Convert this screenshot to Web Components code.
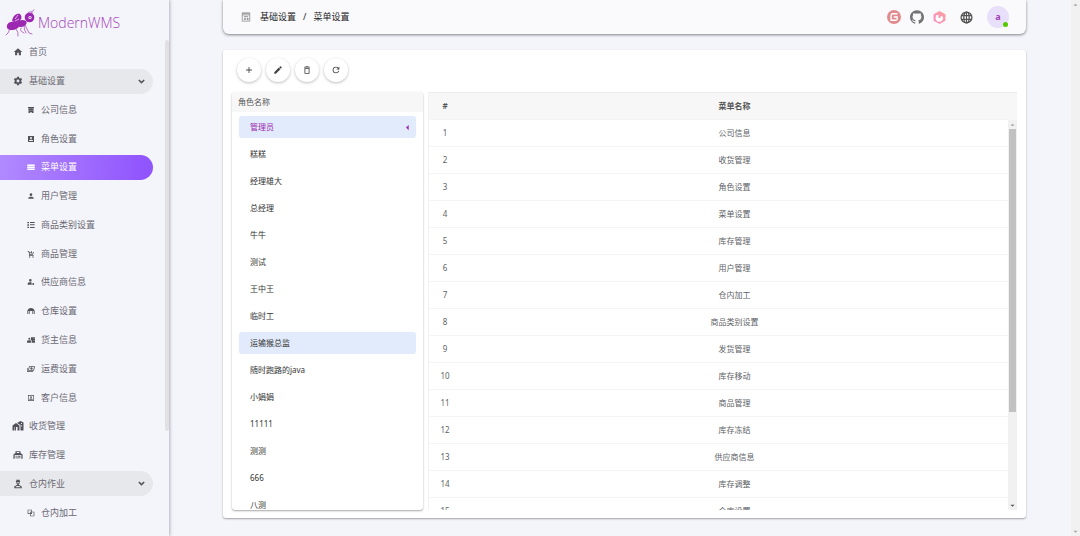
<!DOCTYPE html>
<html lang="zh-CN">
<head>
<meta charset="utf-8">
<title>ModernWMS</title>
<style>
html, body { height: 100%; margin: 0; }
body {
  font-family: "Noto Sans", "Noto Sans CJK SC", sans-serif;
  background: #f4f5fa;
  overflow: hidden;
}
</style>
</head>
<body>
<wms-app></wms-app>
<script>
const ICONS = {
  home: '<path d="M10,20V14H14V20H19V12H22L12,3L2,12H5V20H10Z"/>',
  cog: '<path d="M12,15.5A3.5,3.5 0 0,1 8.5,12A3.5,3.5 0 0,1 12,8.5A3.5,3.5 0 0,1 15.5,12A3.5,3.5 0 0,1 12,15.5M19.43,12.97C19.47,12.65 19.5,12.33 19.5,12C19.5,11.67 19.47,11.34 19.43,11L21.54,9.37C21.73,9.22 21.78,8.95 21.66,8.73L19.66,5.27C19.54,5.05 19.27,4.96 19.05,5.05L16.56,6.05C16.04,5.66 15.5,5.32 14.87,5.07L14.5,2.42C14.46,2.18 14.25,2 14,2H10C9.75,2 9.54,2.18 9.5,2.42L9.13,5.07C8.5,5.32 7.96,5.66 7.44,6.05L4.95,5.05C4.73,4.96 4.46,5.05 4.34,5.27L2.34,8.73C2.21,8.95 2.27,9.22 2.46,9.37L4.57,11C4.53,11.34 4.5,11.67 4.5,12C4.5,12.33 4.53,12.65 4.57,12.97L2.46,14.63C2.27,14.78 2.21,15.05 2.34,15.27L4.34,18.73C4.46,18.95 4.73,19.03 4.95,18.95L7.44,17.94C7.96,18.34 8.5,18.68 9.13,18.93L9.5,21.58C9.54,21.82 9.75,22 10,22H14C14.25,22 14.46,21.82 14.5,21.58L14.87,18.93C15.5,18.67 16.04,18.34 16.56,17.94L19.05,18.95C19.27,19.03 19.54,18.95 19.66,18.73L21.66,15.27C21.78,15.05 21.73,14.78 21.54,14.63L19.43,12.97Z"/>',
  chevron: '<path d="M7.41,7.58L12,12.17L16.59,7.58L19,10L12,17L5,10L7.41,7.58Z"/>',
  building: '<path fill-rule="evenodd" d="M3,3H21V6H19.500V21H14V18H10V21H4.500V6H3ZM8,7V9H10V7ZM14,7V9H16V7ZM8,12V14H10V12ZM14,12V14H16V12Z"/>',
  badge: '<path fill-rule="evenodd" d="M3,3H21V21H3ZM12,6A3,3 0 0,0 12,12A3,3 0 0,0 12,6ZM6,18H18V17C18,15 14,14 12,14C10,14 6,15 6,17Z"/>',
  menu: '<path d="M1,3H23V21H1Z" opacity=".55"/><path d="M1,6H23V9H1ZM1,12H23V15H1ZM1,18H23V21H1Z"/>',
  account: '<path d="M12,4A4,4 0 0,1 16,8A4,4 0 0,1 12,12A4,4 0 0,1 8,8A4,4 0 0,1 12,4M12,14C16.42,14 20,15.79 20,18V20H4V18C4,15.79 7.58,14 12,14Z"/>',
  list: '<path d="M1,3H6V7H1ZM9,3H23V6H9ZM1,10H6V14H1ZM9,10H23V13H9ZM1,17H6V21H1ZM9,18H23V21H9Z"/>',
  cart: '<path d="M2,3H6L7,6H10V8H8L9.5,12H16L19,6L21,7L17.5,14H9L8,16H20V18H7L5.5,16L7,13L4.5,5H2ZM12,3H14V7H17L13,11L9,7H12ZM8,19A2,2 0 0,1 8,23A2,2 0 0,1 8,19M18,19A2,2 0 0,1 18,23A2,2 0 0,1 18,19"/>',
  supplier: '<path d="M10,3A4,4 0 0,1 10,11A4,4 0 0,1 10,3M10,13C11.5,13 13,13.3 14,13.7V20H2V17C2,14.5 6,13 10,13M19,14L20,16L22,17L20.500,18L21,21H16L16.500,18L15,17L17.500,16Z"/>',
  warehouse: '<path fill-rule="evenodd" d="M1,21V11C3,5 8,3 12,3C16,3 21,5 23,11V21H20V12H17V21H15V12H9V21H7V12H4V21Z"/>',
  owner: '<path d="M7,5A3,3 0 0,1 7,11A3,3 0 0,1 7,5M0,20V16C1,12 12,12 13,16V20ZM12,4H24V20H15V15L12,12ZM20,7V9H22V7ZM20,12V14H22V12Z" fill-rule="evenodd"/>',
  money: '<path fill-rule="evenodd" d="M6,4H24L21,17H3ZM8,6L6,15H19L21,6ZM14,7A3,3 0 0,1 13,14A3,3 0 0,1 14,7M1,9H3L2,19H18V21H0Z"/>',
  customer: '<path fill-rule="evenodd" d="M3,3H21V21H3ZM5,5V19H19V5ZM12,7A2.500,2.500 0 0,1 12,12A2.500,2.500 0 0,1 12,7M7,17V16C7,13 17,13 17,16V17Z"/>',
  receive: '<path d="M1,21V11L8,6L15,11V21H11V14H8V21H5V14H4V21ZM10,6L17,2L23,5V21H17V10ZM18,6V8H20V6ZM18,11V13H20V11Z" fill-rule="evenodd"/>',
  stock: '<path d="M1,21V11L6,7V3H18V7L23,11V21H20V12H4V21ZM9,5V7H15V5ZM6,14H9V16H6ZM11,14H18V16H11ZM6,18H18V20H6Z" fill-rule="evenodd"/>',
  worker: '<path fill-rule="evenodd" d="M8,2H16V5H17V7H16A4,4 0 0,1 14,12V14L21,18V22H3V18L10,14V12A4,4 0 0,1 8,7H7V5H8ZM10,8V10H14V8ZM9,17L6,19V20H18V19L15,17Z"/>',
  process: '<path fill-rule="evenodd" d="M2,2H15V8H22V22H9V15H2ZM4,4V13H9V8H13V4ZM11,10V13H13V10ZM15,10V15H11V20H20V10Z"/>',
  plus: '<path d="M19,13H13V19H11V13H5V11H11V5H13V11H19V13Z"/>',
  pencil: '<path d="M20.71,7.04C21.1,6.65 21.1,6 20.71,5.63L18.37,3.29C18,2.9 17.35,2.9 16.96,3.29L15.12,5.12L18.87,8.87M3,17.25V21H6.75L17.81,9.93L14.06,6.18L3,17.25Z"/>',
  trash: '<path fill-rule="evenodd" d="M6,19A2,2 0 0,0 8,21H16A2,2 0 0,0 18,19V7H6V19M8,9H16V19H8V9M15.5,4L14.5,3H9.500L8.500,4H5V6H19V4H15.500Z"/>',
  refresh: '<path d="M17.65,6.35C16.2,4.9 14.21,4 12,4A8,8 0 0,0 4,12A8,8 0 0,0 12,20C15.73,20 18.84,17.45 19.73,14H17.65C16.83,16.33 14.61,18 12,18A6,6 0 0,1 6,12A6,6 0 0,1 12,6C13.66,6 15.14,6.69 16.22,7.78L13,11H20V4L17.65,6.35Z"/>',
  left: '<path d="M16,3V21L7,12Z"/>',
  up: '<path d="M5,16L12,9L19,16Z"/>',
  down: '<path d="M5,9L12,16L19,9Z"/>',
  form: '<g fill="none" stroke="currentColor" stroke-width="2"><path d="M3,2H21V22H3ZM3,7H21M3,4H21M7,11H17M7,15H12M7,18H12"/></g><path d="M14,14H18V19H14Z"/>',
  gitee: '<circle cx="12" cy="12" r="12"/><path d="M18,6.500H10Q7,6.500 7,9.500V17.500H15Q17.500,17.500 17.500,15V12H11.500" fill="none" stroke="#fff" stroke-width="2.400"/>',
  github: '<path d="M12,.5C5.370,.5 0,5.780 0,12.292c0,5.211 3.438,9.630 8.205,11.188.6,.111.820-.254.820-.567 0-.280-.010-1.022-.015-2.005-3.338.711-4.042-1.582-4.042-1.582-.546-1.361-1.335-1.725-1.335-1.725-1.087-.731.084-.716.084-.716 1.205.082 1.838 1.215 1.838 1.215 1.070 1.803 2.809 1.282 3.495.981.108-.763.417-1.282.760-1.577-2.665-.295-5.466-1.309-5.466-5.827 0-1.287.465-2.339 1.235-3.164-.135-.298-.540-1.497.105-3.121 0 0 1.005-.316 3.300 1.209.960-.262 1.980-.392 3-.398 1.020.006 2.040.136 3 .398 2.280-1.525 3.285-1.209 3.285-1.209.645 1.624.240 2.823.120 3.121.765.825 1.230 1.877 1.230 3.164 0 4.530-2.805 5.527-5.475 5.817.420.354.810 1.077.810 2.182 0 1.578-.015 2.846-.015 3.229 0 .309.210.678.825.560C20.565,21.917 24,17.495 24,12.292 24,5.780 18.627,.5 12,.5Z"/>',
  hex: '<defs><linearGradient id="g" x1="0" y1="1" x2="1" y2="0"><stop offset="0" stop-color="#ff8fc4"/><stop offset="1" stop-color="#f7a09c"/></linearGradient></defs><path d="M12,0L23,6V18L12,24L1,18V6Z" fill="url(#g)"/><path d="M6,8L10,7V12Q12,14 14,12V9L18,10A7,7 0 1,1 5,11Z" fill="#fff"/>',
  globe: '<g fill="none" stroke="currentColor" stroke-width="2.400"><circle cx="12" cy="12" r="10"/><ellipse cx="12" cy="12" rx="5" ry="10"/><path d="M3,8.500H21M3,15.500H21M12,2V22" stroke-width="2"/></g>'
};
const svg = (name, size) =>
  `<svg viewBox="0 0 24 24" width="${size}" height="${size}" fill="currentColor" aria-hidden="true">${ICONS[name]}</svg>`;

function define(name, render) {
  customElements.define(name, class extends HTMLElement {
    connectedCallback() {
      if (!this.shadowRoot) this.attachShadow({ mode: 'open' }).innerHTML =
        '<style>*{box-sizing:border-box}svg{display:block;flex:none}</style>' + render(this);
    }
  });
}

define('wms-logo', () => `
<style>
:host { display: flex; align-items: center; gap: 3px; height: 38px; padding: 7px 0 0 5px; box-sizing: border-box; color: #9c27b0; }
span { font: 300 14px/24px "Open Sans", sans-serif; color: #a541bd; }
</style>
<svg viewBox="0 0 30 28" width="30" height="28" fill="#9c27b0" aria-hidden="true">
  <g fill="none" stroke="#a94fbd" stroke-width=".8" stroke-linecap="round">
    <path d="M23,5Q22,2 27,3M27,5Q26,2 29,1"/>
    <path d="M7,19Q4,20 3,24L1,26M11,20Q14,23 13,27M16,19Q14,22 19,24M20,16Q22,20 24,24L27,25M19,17Q19,21 21,24"/>
  </g>
  <path d="M2,17C2,13 7,12 11,13C14,14 15,17 13,19C9,22 1,22 2,17Z"/>
  <path d="M12,14C14,11 18,10 21,12C23,14 20,18 16,18C13,18 11,17 12,14Z"/>
  <circle cx="24.500" cy="8.500" r="4.800"/>
  <path d="M7,12C8,6 12,4 15,5C18,8 16,12 12,14Z"/>
  <path d="M10,10L13,6M10,12L14,10" stroke="#f4f5fa" stroke-width=".7"/>
  <circle cx="25" cy="8.500" r="1.600" fill="#f4f5fa"/><circle cx="25" cy="8.500" r=".7"/>
</svg>
<span>ModernWMS</span>`);

define('nav-item', el => {
  const sub = el.hasAttribute('sub');
  return `
<style>
:host { display: flex; align-items: center; color: #53515a; }
a {
  display: flex; align-items: center; flex: 1; height: 25px; margin-right: 12px; padding: 0 6px 0 ${sub ? 26 : 12}px;
  border-radius: 0 13px 13px 0; color: inherit; text-decoration: none; font-size: 9px; line-height: 14px;
}
.icon { display: flex; justify-content: center; width: ${sub ? 9 : 12}px; margin-right: ${sub ? 6 : 5}px; }
.label { flex: 1; color: #6b6873; }
:host([group]) a { background: #e7e8eb; }
:host([active]) a { background: linear-gradient(98deg, #b18aff, #9155fd 94%); color: #fff; }
:host([active]) .label { color: #fff; }
</style>
<a href="#"><span class="icon">${svg(el.getAttribute('icon'), sub ? 8 : el.getAttribute('icon') === 'receive' ? 12 : 10)}</span><span class="label"><slot></slot></span>${el.hasAttribute('group') ? svg('chevron', 11) : ''}</a>`;
});

const NAV = [
  ['home', '首页', ''], ['cog', '基础设置', 'group'], ['building', '公司信息', 'sub'], ['badge', '角色设置', 'sub'],
  ['menu', '菜单设置', 'sub active'], ['account', '用户管理', 'sub'], ['list', '商品类别设置', 'sub'], ['cart', '商品管理', 'sub'],
  ['supplier', '供应商信息', 'sub'], ['warehouse', '仓库设置', 'sub'], ['owner', '货主信息', 'sub'], ['money', '运费设置', 'sub'],
  ['customer', '客户信息', 'sub'], ['receive', '收货管理', ''], ['stock', '库存管理', ''], ['worker', '仓内作业', 'group'],
  ['process', '仓内加工', 'sub']
];
define('wms-sidebar', () => `
<style>
:host { display: block; width: 169px; flex: none; background: #f4f5fa; box-shadow: 1px 0 3px rgba(60,50,80,.35); overflow: hidden; }
.body { display: flex; }
nav { flex: 1; display: grid; grid-auto-rows: 1fr; height: 489px; }
.thumb { width: 4px; height: 391px; margin-top: 2px; background: #e1e0e5; border-radius: 2px; }
</style>
<wms-logo></wms-logo>
<div class="body">
  <nav>${NAV.map(([i, t, f]) => `<nav-item icon="${i}" ${f}>${t}</nav-item>`).join('')}</nav>
  <div class="thumb"></div>
</div>`);

define('scroll-rail', el => `
<style>
:host { display: flex; flex-direction: column; width: 9px; flex: none; background: #f1f1f1; color: #a3a3a3; align-items: center; }
svg { margin: 1px 0; }
.track { flex: 1; width: 7px; }
.thumb { height: 76%; background: #c1c1c1; }
.end { color: ${el.hasAttribute('thumb') ? '#505050' : '#a3a3a3'}; }
</style>
${svg('up', 7)}<div class="track">${el.hasAttribute('thumb') ? '<div class="thumb"></div>' : ''}</div><span class="end">${svg('down', 7)}</span>`);

define('wms-header', () => `
<style>
:host {
  display: flex; align-items: center; justify-content: space-between; height: 34px; flex: none; box-sizing: border-box;
  padding: 0 17px 0 18px; background: #fafafc; border-radius: 0 0 6px 6px; box-shadow: 0 1px 3px rgba(50,50,60,.6);
}
.crumbs, .tools { display: flex; align-items: center; }
.crumbs { gap: 7px; font-size: 9px; line-height: 14px; color: #222; }
.form { color: #8f8f8f; margin-right: 2px; }
button { display: flex; padding: 0; border: 0; background: none; font: inherit; }
.tools { gap: 9px; }
.gitee { color: #e28b8f; }
.github { color: #747474; }
.globe { color: #555; margin: 0 5px; }
.avatar {
  position: relative; width: 22px; height: 22px; border-radius: 50%; background: #e8dffb;
  justify-content: center; align-items: center; color: #a03fb5; font-size: 9px; line-height: 12px; font-weight: 700;
}
.dot { position: absolute; right: 1px; bottom: 1px; width: 5px; height: 5px; border-radius: 50%; background: #56ca00; }
</style>
<div class="crumbs"><span class="form">${svg('form', 10)}</span><span>基础设置</span><span>/</span><span>菜单设置</span></div>
<div class="tools">
  <button class="gitee" aria-label="Gitee">${svg('gitee', 14)}</button>
  <button class="github" aria-label="GitHub">${svg('github', 14)}</button>
  <button aria-label="GitCode">${svg('hex', 13)}</button>
  <button class="globe" aria-label="Language">${svg('globe', 13)}</button>
  <button class="avatar">a<span class="dot"></span></button>
</div>`);

define('round-button', el => `
<style>
:host { display: block; }
button {
  display: flex; align-items: center; justify-content: center; width: 24px; height: 24px; padding: 0; border: 0;
  border-radius: 50%; background: #fff; color: #444; box-shadow: 0 1px 3px rgba(0,0,0,.26);
}
</style>
<button aria-label="${el.getAttribute('label')}">${svg(el.getAttribute('icon'), 10)}</button>`);

const ROLES = ['管理员', '糕糕', '经理雄大', '总经理', '牛牛', '测试', '王中王', '临时工', '运输猴总监', '随时跑路的java', '小娟娟', '11111', '测测', '666', '八测'];
define('role-list', () => `
<style>
:host { display: flex; flex-direction: column; width: 191px; flex: none; overflow: hidden; border-radius: 3px; box-shadow: 0 1px 2px rgba(0,0,0,.35); background: #fff; }
h2 { margin: 0; padding: 0 6px; flex: none; font-size: 8px; font-weight: 400; line-height: 20px; color: #555; background: #f7f7f7; }
ul { margin: 0; padding: 4px 7px 0; list-style: none; display: grid; gap: 5px; }
button {
  display: flex; align-items: center; justify-content: space-between; width: 100%; height: 22px; padding: 0 5px 0 11px;
  border: 0; border-radius: 3px; background: none; font: inherit; font-size: 8px; line-height: 12px; color: #333;
}
.on { background: #e2ebfb; }
.current { color: #9c27b0; }
</style>
<h2>角色名称</h2>
<ul>${ROLES.map((r, i) => `<li><button class="${i === 0 ? 'on current' : i === 8 ? 'on' : ''}">${r}${i === 0 ? svg('left', 7) : ''}</button></li>`).join('')}</ul>`);

const MENUS = ['公司信息', '收货管理', '角色设置', '菜单设置', '库存管理', '用户管理', '仓内加工', '商品类别设置', '发货管理', '库存移动', '商品管理', '库存冻结', '供应商信息', '库存调整', '仓库设置'];
define('menu-table', () => `
<style>
:host { display: flex; flex: 1; min-width: 0; overflow: hidden; border: 1px solid #f2f2f2; border-width: 0 0 0 1px; box-sizing: border-box; }
.view { flex: 1; overflow: hidden; }
table { width: 100%; border-collapse: separate; border-spacing: 0; table-layout: fixed; font-size: 8px; line-height: 12px; color: #606266; }
th, td { height: 27px; padding: 0; text-align: center; border-bottom: 1px solid #f4f4f4; }
th { height: 28px; background: #f7f7f7; color: #555; font-weight: 600; border-top: 1px solid #ececec; }
th:first-child { width: 32px; }
.side { display: flex; flex-direction: column; }
.cap { height: 28px; background: #f7f7f7; border-top: 1px solid #ececec; }
scroll-rail { flex: 1; }
</style>
<div class="view"><table>
<thead><tr><th>#</th><th>菜单名称</th></tr></thead>
<tbody>${MENUS.map((m, i) => `<tr><td>${i + 1}</td><td>${m}</td></tr>`).join('')}</tbody>
</table></div>
<div class="side"><div class="cap"></div><scroll-rail thumb></scroll-rail></div>`);

define('wms-card', () => `
<style>
:host {
  display: flex; flex-direction: column; gap: 10px; flex: 1; min-height: 0; margin: 16px 0 18px; padding: 8px 9px; box-sizing: border-box;
  background: #fff; border-radius: 3px; box-shadow: 0 1px 2px rgba(0,0,0,.35);
}
.tools { display: flex; gap: 5px; padding: 0 5px; }
.panels { display: flex; gap: 5px; flex: 1; min-height: 0; }
</style>
<div class="tools">
  <round-button icon="plus" label="新增"></round-button>
  <round-button icon="pencil" label="编辑"></round-button>
  <round-button icon="trash" label="删除"></round-button>
  <round-button icon="refresh" label="刷新"></round-button>
</div>
<div class="panels"><role-list></role-list><menu-table></menu-table></div>`);

define('wms-app', () => `
<style>
:host { display: flex; height: 100vh; }
main { flex: 1; min-width: 0; display: flex; flex-direction: column; padding: 0 45px 0 54px; }
</style>
<wms-sidebar></wms-sidebar>
<main><wms-header></wms-header><wms-card></wms-card></main>
<scroll-rail></scroll-rail>`);
</script>
</body>
</html>
